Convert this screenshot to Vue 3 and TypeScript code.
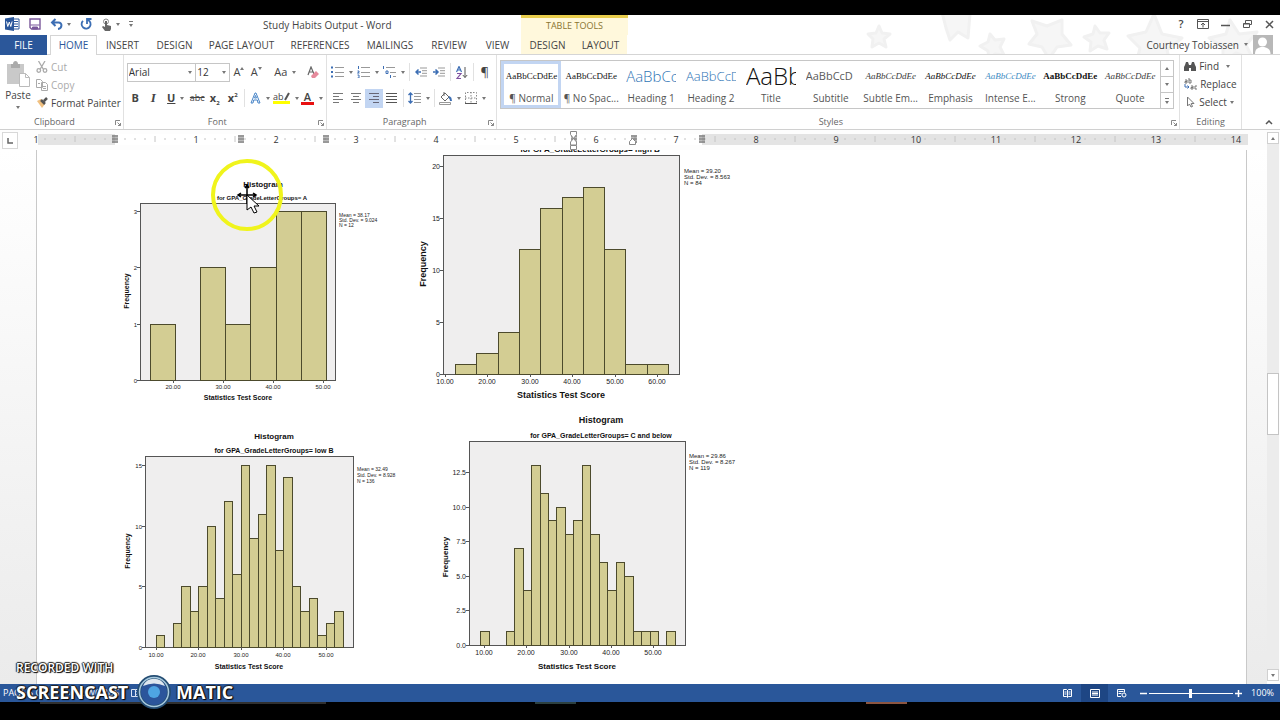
<script setup lang="ts">
import { ref } from 'vue'

interface Tab { name: string; width: number }
interface StyleItem { name: string; sample: string; kind: string }
interface Tick { at: number; label: string }
interface Chart {
  id: string
  view: [number, number, number, number]
  title?: string
  titleAt: [number, number]
  subtitle: string
  subtitleAt: [number, number]
  frame: [number, number, number, number]
  base: number
  unit: number
  start: number
  barWidth: number
  counts: number[]
  xTicks: Tick[]
  yTicks: Tick[]
  stats: string[]
  statsAt: [number, number]
  axisAt: [number, number]
  freqAt: [number, number]
  size: string
}

const tabs: Tab[] = [
  { name: 'INSERT', width: 51 },
  { name: 'DESIGN', width: 53 },
  { name: 'PAGE LAYOUT', width: 81 },
  { name: 'REFERENCES', width: 76 },
  { name: 'MAILINGS', width: 64 },
  { name: 'REVIEW', width: 54 },
  { name: 'VIEW', width: 43 },
]

const styleItems: StyleItem[] = [
  { name: '¶ Normal', sample: 'AaBbCcDdEe', kind: 'normal' },
  { name: '¶ No Spac...', sample: 'AaBbCcDdEe', kind: 'normal' },
  { name: 'Heading 1', sample: 'AaBbCc', kind: 'h1' },
  { name: 'Heading 2', sample: 'AaBbCcD', kind: 'h2' },
  { name: 'Title', sample: 'AaBb', kind: 'title' },
  { name: 'Subtitle', sample: 'AaBbCcD', kind: 'subtitle' },
  { name: 'Subtle Em...', sample: 'AaBbCcDdEe', kind: 'subtle' },
  { name: 'Emphasis', sample: 'AaBbCcDdEe', kind: 'emphasis' },
  { name: 'Intense E...', sample: 'AaBbCcDdEe', kind: 'intense' },
  { name: 'Strong', sample: 'AaBbCcDdEe', kind: 'strong' },
  { name: 'Quote', sample: 'AaBbCcDdEe', kind: 'quote' },
]

const ticks = (first: number, step: number, labels: string[]): Tick[] =>
  labels.map((label, i) => ({ at: Math.round(first + i * step), label }))

const leftCharts: Chart[] = [
  {
    id: 'a', view: [117, 150, 290, 264], title: 'Histogram', titleAt: [263, 187],
    subtitle: 'for GPA_GradeLetterGroups= A', subtitleAt: [262, 200],
    frame: [140, 203, 195, 177], base: 380, unit: 56.3, start: 150, barWidth: 25.1,
    counts: [1, 0, 2, 1, 2, 3, 3],
    xTicks: ticks(173, 50.1, ['20.00', '30.00', '40.00', '50.00']),
    yTicks: ticks(380, -56.3, ['0', '1', '2', '3']),
    stats: ['Mean = 38.17', 'Std. Dev. = 9.024', 'N = 12'], statsAt: [339, 217],
    axisAt: [238, 400], freqAt: [129, 291], size: 'small',
  },
  {
    id: 'low-b', view: [117, 414, 290, 264], title: 'Histogram', titleAt: [274, 439],
    subtitle: 'for GPA_GradeLetterGroups= low B', subtitleAt: [274, 453],
    frame: [145, 456, 208, 191], base: 647, unit: 12.13, start: 156, barWidth: 8.48,
    counts: [1, 0, 2, 5, 3, 5, 10, 4, 12, 6, 15, 9, 11, 15, 8, 14, 5, 3, 4, 1, 2, 3],
    xTicks: ticks(156, 42.4, ['10.00', '20.00', '30.00', '40.00', '50.00']),
    yTicks: ticks(647, -60.7, ['0', '5', '10', '15']),
    stats: ['Mean = 32.49', 'Std. Dev. = 8.928', 'N = 136'], statsAt: [357, 471],
    axisAt: [249, 669], freqAt: [130, 551], size: 'medium',
  },
]

const rightCharts: Chart[] = [
  {
    id: 'high-b', view: [413, 150, 340, 256], titleAt: [590, 137],
    subtitle: 'for GPA_GradeLetterGroups= high B', subtitleAt: [590, 152],
    frame: [443, 155, 236, 219], base: 374, unit: 10.4, start: 455, barWidth: 21.3,
    counts: [1, 2, 4, 12, 16, 17, 18, 12, 1, 1],
    xTicks: ticks(445, 42.4, ['10.00', '20.00', '30.00', '40.00', '50.00', '60.00']),
    yTicks: ticks(374, -52, ['0', '5', '10', '15', '20']),
    stats: ['Mean = 39.20', 'Std. Dev. = 8.563', 'N = 84'], statsAt: [684, 173],
    axisAt: [561, 398], freqAt: [426, 264], size: 'huge',
  },
  {
    id: 'c', view: [413, 406, 340, 272], title: 'Histogram', titleAt: [601, 423],
    subtitle: 'for GPA_GradeLetterGroups= C and below', subtitleAt: [601, 438],
    frame: [469, 441, 216, 204], base: 645, unit: 13.85, start: 480.3, barWidth: 8.46,
    counts: [1, 0, 0, 1, 7, 4, 13, 11, 9, 10, 8, 9, 13, 8, 6, 4, 6, 5, 1, 1, 1, 0, 1],
    xTicks: ticks(484, 42.3, ['10.00', '20.00', '30.00', '40.00', '50.00']),
    yTicks: ticks(645, -34.6, ['0.0', '2.5', '5.0', '7.5', '10.0', '12.5']),
    stats: ['Mean = 29.86', 'Std. Dev. = 8.267', 'N = 119'], statsAt: [689, 458],
    axisAt: [577, 669], freqAt: [448, 557], size: 'large',
  },
]

const columns = [leftCharts, rightCharts]

const bars = (c: Chart) =>
  c.counts
    .map((n, i) => {
      const x = Math.round(c.start + i * c.barWidth)
      const right = Math.round(c.start + (i + 1) * c.barWidth)
      const y = Math.round(c.base - n * c.unit)
      return { n, x, y, w: right - x, h: c.base - y }
    })
    .filter((b) => b.n > 0)

const inches = Array.from({ length: 16 }, (_, i) => ({
  x: i * 80,
  label: i === 1 ? '' : String(Math.abs(i - 1)),
}))
const minor = Array.from({ length: 119 }, (_, i) => ({ x: i * 10 + 10, half: (i + 1) % 8 === 4 }))
  .filter((m) => m.x % 80 !== 0)
const markers = [80, 206, 291, 539, 599, 667]

const font = ref('Arial')
const fontSize = ref('12')
const zoom = ref(49)
</script>

<template>
  <div class="app">
    <header class="head">
      <svg class="stars" width="460" height="39" viewBox="820 15 460 39" aria-hidden="true">
        <g fill="#f6f6f6" stroke="#f1f1f1" stroke-width="3" stroke-linejoin="round">
          <path d="M879 26l3 7 8 1-6 5 2 8-7-4-7 4 1-8-5-5 8-1z" />
          <path d="M942 12l28 2-2 24-10-6-8 8-4-12z" />
          <path d="M990 34l5 6 9-1-4 8 4 8-9-1-6 5-1-8-8-5 8-4z" />
          <path d="M1032 21l15 5 15-6 0 14 9 11-14 2-8 12-7-12-13-3 8-10z" />
          <path d="M1095 26l5 7 9 0-5 7 3 9-9-3-8 5 1-9-7-5 9-3z" />
          <path d="M1154 14l8 20 20 4-15 12 4 16-17-10-18 8 4-16-12-12 18-4z" />
          <path d="M1230 20l9 14 18-2-11 13 7 14-17-6-13 10v-16l-14-9 17-4z" />
        </g>
      </svg>
      <div class="titlebar">
        <div class="qat">
          <svg class="logo" width="15" height="14" viewBox="0 0 15 14"><path d="M8 2h6v10H8z" fill="#fff" stroke="#2b579a"/><path d="M9 4.5h4M9 7h4M9 9.500h4" stroke="#2b579a"/><path d="M0 1.500L9 0v14L0 12.500z" fill="#2b579a"/><path d="M1.500 4.500l1.300 5 1.500-4.500 1.500 4.500 1.300-5" fill="none" stroke="#fff"/></svg>
          <button aria-label="Save"><svg width="12" height="12" viewBox="0 0 12 12"><path d="M1 1h10v10H2.500L1 9.500z" fill="#fff" stroke="#79579a" stroke-width="1.400"/><path d="M1.500 7h9M3.500 9h5v2h-5z" fill="#79579a" stroke="#79579a"/></svg></button>
          <button aria-label="Undo" class="wide"><svg width="14" height="12" viewBox="0 0 14 12"><path d="M5.500 1L2 4.500 5.500 8M2 4.500h6.500c4 0 4 6-.5 6.500" fill="none" stroke="#3c6eb4" stroke-width="2"/></svg><i class="caret"></i></button>
          <button aria-label="Repeat"><svg width="12" height="12" viewBox="0 0 12 12"><path d="M8 2A4.500 4.500 0 1 1 3 2.800M7 6V1h4.500" fill="none" stroke="#3c6eb4" stroke-width="1.800"/></svg></button>
          <button aria-label="Touch mode" class="wide"><svg width="12" height="13" viewBox="0 0 12 13"><circle cx="5" cy="3.500" r="2.500" fill="none" stroke="#888"/><path d="M4 3h2v4l4 1v3l-1 2H4L1 9l1-1 2 1z" fill="#666"/></svg><i class="caret"></i></button>
          <button aria-label="Customize toolbar"><span class="more"><i class="caret"></i></span></button>
        </div>
        <h1>Study Habits Output - Word</h1>
        <div class="tools">TABLE TOOLS</div>
        <div class="winbtns">
          <button aria-label="Help">?</button>
          <button aria-label="Ribbon display"><svg width="12" height="10" viewBox="0 0 12 10" fill="none" stroke="#555"><path d="M.5.500h11v9H.5zM.5 2.500h11M6 8.500V4M4 6l2-2 2 2"/></svg></button>
          <button aria-label="Minimize"><svg width="9" height="10" viewBox="0 0 9 10"><path d="M0 6.500h9" stroke="#555" stroke-width="1.500"/></svg></button>
          <button aria-label="Restore"><svg width="9" height="9" viewBox="0 0 9 9" fill="none" stroke="#555"><path d="M2.500 3V.5h6v4H6.500M.5 3.500h6v4h-6zM.5 4h6"/></svg></button>
          <button aria-label="Close"><svg width="9" height="9" viewBox="0 0 9 9"><path d="M1 1l7 7M8 1L1 8" stroke="#555" stroke-width="1.500"/></svg></button>
        </div>
      </div>
      <nav class="tabs">
        <button class="file">FILE</button>
        <button class="home">HOME</button>
        <button v-for="t in tabs" :key="t.name" :style="{ width: t.width + 'px' }">{{ t.name }}</button>
        <div class="context">
          <button>DESIGN</button>
          <button>LAYOUT</button>
        </div>
        <button class="user">Courtney Tobiassen <i class="caret"></i></button>
        <svg class="avatar" width="20" height="19" viewBox="0 0 20 19"><path d="M0 0h20v19H0z" fill="#b8b8b8"/><circle cx="9.500" cy="7" r="4.500" fill="#fff"/><path d="M2 19c0-5 3-7 7.500-7s8 2 8 7z" fill="#fff"/></svg>
      </nav>
    </header>

    <section class="ribbon">
      <div class="group clipboard">
        <div class="body">
          <button class="paste">
            <svg width="25" height="27" viewBox="0 0 25 27"><path d="M1 3h17v20H1z" fill="#c9c9c9"/><path d="M5 3h2c0-4 5-4 5 0h2v4H5z" fill="#aaa"/><path d="M13.500 12.500h6l4 4v9h-10z" fill="#fff" stroke="#bbb"/><path d="M19.500 12.500v4h4" fill="none" stroke="#bbb"/></svg>
            <span>Paste</span><i class="caret"></i>
          </button>
          <div class="stack">
            <button class="dim"><svg width="12" height="12" viewBox="0 0 12 12" fill="none" stroke="#aaa" stroke-width="1.300"><path d="M2.500 0l5 8.500M9 0L4 8.500"/><circle cx="2.800" cy="9.500" r="1.800"/><circle cx="9" cy="9.500" r="1.800"/></svg>Cut</button>
            <button class="dim"><svg width="12" height="12" viewBox="0 0 12 12" fill="#fff" stroke="#aaa"><path d="M.5.500h4l2 2v6h-6zM5.500 3.500h4l2 2v6h-6zM7 7.500h3M7 9.500h3M2 4.500h2"/></svg>Copy</button>
            <button><svg width="12" height="12" viewBox="0 0 12 12"><path d="M1 4l4-2 4 5-3 4z" fill="#f0c080"/><path d="M5 3l4 4M8 4l3-3" stroke="#555" stroke-width="2.500"/></svg>Format Painter</button>
          </div>
        </div>
        <footer>Clipboard<button class="launch" aria-label="Clipboard options"><svg width="6" height="6" viewBox="0 0 6 6" fill="none" stroke="#888"><path d="M.5 5V.5H5M2.500 2.500l3 3M5.500 3v2.500H3"/></svg></button></footer>
      </div>

      <div class="group fonts">
        <div class="body rows">
          <div class="row">
            <label class="combo name"><select v-model="font" aria-label="Font"><option>Arial</option></select><i class="caret"></i></label>
            <label class="combo size"><select v-model="fontSize" aria-label="Font size"><option>12</option></select><i class="caret"></i></label>
            <button class="w18 up" aria-label="Grow font">A<i class="caret flip"></i></button>
            <button class="w18 up" aria-label="Shrink font">A<i class="caret"></i></button>
            <button class="w30">Aa<i class="caret"></i></button>
            <button class="w26" aria-label="Clear formatting"><svg width="12" height="13" viewBox="0 0 12 13"><path d="M1 9l3-8 3 7M2 6h4" fill="none" stroke="#666" stroke-width="1.200"/><path d="M4 10l5-5 3 3-4 4H5z" fill="#e68a9c"/></svg></button>
          </div>
          <div class="row">
            <button class="w16"><b>B</b></button>
            <button class="w20 serif"><em>I</em></button>
            <button class="w26"><u>U</u><i class="caret"></i></button>
            <button class="w16"><s>abc</s></button>
            <button class="w18"><b>x<sub>2</sub></b></button>
            <button class="w18"><b>x<sup>2</sup></b></button>
            <span class="sep"></span>
            <button class="w26" aria-label="Text effects"><svg width="11" height="12" viewBox="0 0 11 12"><path d="M1 11L5 1h1l4 10H8L7.300 8H3.700L3 11zM4.500 6h2L5.500 3.500z" fill="#fff" stroke="#4a86c8" stroke-width="1"/></svg><i class="caret"></i></button>
            <button class="w26" aria-label="Highlight"><span class="hl">ab<svg width="6" height="9" viewBox="0 0 6 9"><path d="M1 8l4-7" stroke="#555" stroke-width="2"/></svg></span><i class="caret"></i></button>
            <button class="w26" aria-label="Font color"><span class="fc">A</span><i class="caret"></i></button>
          </div>
        </div>
        <footer>Font<button class="launch" aria-label="Font options"><svg width="6" height="6" viewBox="0 0 6 6" fill="none" stroke="#888"><path d="M.5 5V.5H5M2.500 2.500l3 3M5.500 3v2.500H3"/></svg></button></footer>
      </div>

      <div class="group para">
        <div class="body rows">
          <div class="row">
            <button class="w26" aria-label="Bullets"><svg width="13" height="12" viewBox="0 0 13 12"><path d="M0 1.500h2M0 6h2M0 10.500h2" stroke="#3c6eb4" stroke-width="2"/><path d="M4 1.500h9M4 6.500h9M4 10.500h9" stroke="#999"/></svg><i class="caret"></i></button>
            <button class="w26" aria-label="Numbering"><svg width="13" height="12" viewBox="0 0 13 12"><path d="M1.500 0v3M.5 5h1.500v1L.5 7H2.500M.5 9H2v3H.5" stroke="#3c6eb4" fill="none"/><path d="M4 1.500h9M4 6.500h9M4 10.500h9" stroke="#999"/></svg><i class="caret"></i></button>
            <button class="w26" aria-label="Multilevel list"><svg width="13" height="12" viewBox="0 0 13 12"><path d="M.5 0v3M3 5h2v2.500H3V5M7.500 9v3" stroke="#3c6eb4" fill="none"/><path d="M3 1.500h9M7 6.500h6M10 10.500h3" stroke="#999"/></svg><i class="caret"></i></button>
            <span class="sep"></span>
            <button class="w18" aria-label="Decrease indent"><svg width="12" height="10" viewBox="0 0 12 10"><path d="M5 1h7M7 3.700h5M7 6.300h5M5 9h7" stroke="#999"/><path d="M6 5H1M3.500 2.500L1 5l2.500 2.500" stroke="#3c6eb4" stroke-width="1.500" fill="none"/></svg></button>
            <button class="w18" aria-label="Increase indent"><svg width="12" height="10" viewBox="0 0 12 10"><path d="M5 1h7M7 3.700h5M7 6.300h5M5 9h7" stroke="#999"/><path d="M0 5h5M2.500 2.500L5 5 2.500 7.500" stroke="#3c6eb4" stroke-width="1.500" fill="none"/></svg></button>
            <span class="sep"></span>
            <button class="w18" aria-label="Sort"><svg width="12" height="13" viewBox="0 0 12 13" fill="none"><path d="M.5 6L3 .5 5.500 6M1.500 4h3" stroke="#3c6eb4" stroke-width="1.200"/><path d="M1 7.500h4L1 12.500h4" stroke="#8050a0" stroke-width="1.200"/><path d="M9 1v10.500M6.800 9L9 11.500 11.200 9" stroke="#555"/></svg></button>
            <span class="sep"></span>
            <button class="w18 pil">¶</button>
          </div>
          <div class="row">
            <button class="w18" aria-label="Align left"><svg width="10" height="10" viewBox="0 0 10 10"><path d="M0 .5h10M0 3.500h6M0 6.500h10M0 9.500h6" stroke="#777"/></svg></button>
            <button class="w18" aria-label="Center"><svg width="10" height="10" viewBox="0 0 10 10"><path d="M0 .5h10M2 3.500h6M0 6.500h10M2 9.500h6" stroke="#777"/></svg></button>
            <button class="w18 on" aria-label="Align right"><svg width="10" height="10" viewBox="0 0 10 10"><path d="M0 .5h10M4 3.500h6M0 6.500h10M4 9.500h6" stroke="#667"/></svg></button>
            <button class="w18" aria-label="Justify"><svg width="11" height="10" viewBox="0 0 11 10"><path d="M0 .5h11M0 3.500h11M0 6.500h11M0 9.500h11" stroke="#555"/></svg></button>
            <span class="sep"></span>
            <button class="w26" aria-label="Line spacing"><svg width="13" height="12" viewBox="0 0 13 12"><path d="M2.500 1v10M.5 3l2-2 2 2M.5 9l2 2 2-2" stroke="#3c6eb4" fill="none" stroke-width="1.300"/><path d="M6 1.500h7M6 4.500h7M6 7.500h7M6 10.500h7" stroke="#999"/></svg><i class="caret"></i></button>
            <span class="sep"></span>
            <button class="w26" aria-label="Shading"><svg width="13" height="13" viewBox="0 0 13 13"><path d="M2 5l4-4 4 4-4 4zM5 0v4" stroke="#666" fill="#fff"/><path d="M10 5c2 1 2 3 2 4" stroke="#3c6eb4" stroke-width="2" fill="none"/><path d="M.5 10.500h11v2H.5z" fill="#fff" stroke="#999"/></svg><i class="caret"></i></button>
            <button class="w26" aria-label="Borders"><svg width="12" height="12" viewBox="0 0 12 12" fill="none" stroke="#888"><path d="M.5 11V.5h11V11M6 0v12M0 6h12" stroke-dasharray="1.500 1.500"/><path d="M0 11.500h12" stroke="#555"/></svg><i class="caret"></i></button>
          </div>
        </div>
        <footer>Paragraph<button class="launch" aria-label="Paragraph options"><svg width="6" height="6" viewBox="0 0 6 6" fill="none" stroke="#888"><path d="M.5 5V.5H5M2.500 2.500l3 3M5.500 3v2.500H3"/></svg></button></footer>
      </div>

      <div class="group styles">
        <div class="body">
          <div class="gallery">
            <button v-for="(s, i) in styleItems" :key="s.name" class="style" :class="{ picked: i === 0 }">
              <span class="sample" :class="s.kind">{{ s.sample }}</span>
              <span class="sname">{{ s.name }}</span>
            </button>
            <div class="scrollers">
              <button aria-label="Previous styles"><i class="caret flip"></i></button>
              <button aria-label="Next styles"><i class="caret"></i></button>
              <button aria-label="More styles"><span class="more"><i class="caret"></i></span></button>
            </div>
          </div>
        </div>
        <footer>Styles<button class="launch" aria-label="Style options"><svg width="6" height="6" viewBox="0 0 6 6" fill="none" stroke="#888"><path d="M.5 5V.5H5M2.500 2.500l3 3M5.500 3v2.500H3"/></svg></button></footer>
      </div>

      <div class="group editing">
        <div class="body">
          <div class="stack">
            <button><svg width="12" height="11" viewBox="0 0 12 11"><path d="M1 4l1-3h2l1 3v6H0V6zM7 4l1-3h2l1 3 1 2v4H7zM5 4h2v3H5z" fill="#555"/></svg>Find <i class="caret gap"></i></button>
            <button><svg width="13" height="12" viewBox="0 0 13 12" fill="none"><path d="M1 2h2v3H1V3.500h2M5 0v5h2V2H5M7 8h2v3H7V9.500h2M13 8h-2v3h2" stroke="#777"/><path d="M1 6v3h4M3.500 7.500L5 9l-1.500 1.500" stroke="#3c6eb4"/></svg>Replace</button>
            <button><svg width="12" height="12" viewBox="0 0 12 12"><path d="M3.500 1v9l2-2 1.500 3 1.500-.5L7.200 7.500H10z" fill="#fff" stroke="#777"/></svg>Select<i class="caret"></i></button>
          </div>
        </div>
        <footer>Editing</footer>
      </div>
      <button class="collapse" aria-label="Collapse ribbon"><svg width="8" height="5" viewBox="0 0 8 5"><path d="M1 4l3-3 3 3" fill="none" stroke="#555" stroke-width="1.500"/></svg></button>
    </section>

    <main class="work">
      <div class="canvas">
        <div class="rulerbar">
          <button class="tabstop" aria-label="Tab stop"><svg width="6" height="6" viewBox="0 0 6 6"><path d="M1 0v5h5" fill="none" stroke="#666" stroke-width="1.500"/></svg></button>
          <svg class="ruler" width="1213" height="20" viewBox="0 0 1213 20">
            <path d="M3 4h1210v11H3z" fill="#e3e3e3" />
            <path d="M80 4h587v11H80z" fill="#fff" />
            <path v-for="m in minor" :key="m.x" :d="m.half ? `M${m.x} 6v6` : `M${m.x} 8v2`" stroke="#c4c4c4" />
            <text v-for="n in inches" :key="n.x" :x="n.x + 1" y="13" text-anchor="middle">{{ n.label }}</text>
            <path v-for="k in markers" :key="k" :d="`M${k - 3} 6h6M${k - 3} 9h6M${k - 3} 12h6M${k - 2} 5v8M${k} 5v8M${k + 2} 5v8`" stroke="#777" />
            <g fill="#fff" stroke="#888"><path d="M535.500 1.500h6v3l-3 4-3-4zM535.500 15v-3l3-3.500 3 3.500v3zM535.500 15.500h6v4h-6zM594.500 14.500v-3l3-3 3 3v3z" /></g>
          </svg>
        </div>
        <div class="desk">
          <article class="page">
            <div v-for="(col, i) in columns" :key="i" class="col">
              <svg v-for="c in col" :key="c.id" :width="c.view[2]" :height="c.view[3]" :viewBox="c.view.join(' ')" class="chart" :class="c.size">
                <rect :x="c.frame[0]" :y="c.frame[1]" :width="c.frame[2]" :height="c.frame[3]" class="plot" />
                <rect v-for="b in bars(c)" :key="b.x" :x="b.x" :y="b.y" :width="b.w" :height="b.h" class="bar" />
                <g class="axis">
                  <path v-for="t in c.yTicks" :key="t.label" :d="`M${c.frame[0] - 3} ${t.at}h3`" />
                  <path v-for="t in c.xTicks" :key="t.label" :d="`M${t.at} ${c.base}v3`" />
                </g>
                <g class="ticks">
                  <text v-for="t in c.yTicks" :key="t.label" :x="c.frame[0] - 3" :y="t.at + 3" text-anchor="end">{{ t.label }}</text>
                  <text v-for="t in c.xTicks" :key="t.label" :x="t.at" :y="c.base + (c.size === 'small' ? 9 : 10)" text-anchor="middle">{{ t.label }}</text>
                </g>
                <g class="stats">
                  <text v-for="(s, k) in c.stats" :key="s" :x="c.statsAt[0]" :y="c.statsAt[1] + k * (c.size === 'small' ? 5 : 6)">{{ s }}</text>
                </g>
                <text v-if="c.title" class="ctitle" :x="c.titleAt[0]" :y="c.titleAt[1]">{{ c.title }}</text>
                <text class="csub" :x="c.subtitleAt[0]" :y="c.subtitleAt[1]">{{ c.subtitle }}</text>
                <text class="clabel" :x="c.axisAt[0]" :y="c.axisAt[1]">Statistics Test Score</text>
                <text class="clabel" :transform="`translate(${c.freqAt[0]} ${c.freqAt[1]}) rotate(-90)`">Frequency</text>
              </svg>
            </div>
          </article>
        </div>
      </div>
      <div class="scrollbar">
        <button aria-label="Scroll up"><i class="caret flip"></i></button>
        <div class="track"><div class="thumb"></div></div>
        <button aria-label="Scroll down"><i class="caret"></i></button>
      </div>
    </main>

    <footer class="status">
      <span class="page-no">PAGE 5 OF 8</span>
      <span class="words">412 WORDS</span>
      <svg class="proof" width="10" height="10" viewBox="0 0 10 10" fill="none" stroke="#dce6f5"><path d="M.5 1.500h4v7h-4zM4.500 1.500h4M4.500 8.500h4M5.500 3l3 4M8.500 3l-3 4"/></svg>
      <div class="views">
        <button aria-label="Read mode"><svg width="9" height="9" viewBox="0 0 9 9" fill="none" stroke="#fff"><path d="M.5.500h3l1 1 1-1h3v7h-3l-1 1-1-1h-3zM4.500 1v7M1.500 3h2M1.500 5h2M5.500 3h2M5.500 5h2"/></svg></button>
        <button class="current" aria-label="Print layout"><svg width="10" height="9" viewBox="0 0 10 9" fill="none" stroke="#fff"><path d="M.5.500h9v8h-9zM2 3h6M2 4.500h6M2 6h6"/></svg></button>
        <button aria-label="Web layout"><svg width="10" height="9" viewBox="0 0 10 9" fill="none" stroke="#fff"><path d="M4 7.500H.5v-7h7v3M1.500 2.500h5M1.500 4.500h3"/><circle cx="7" cy="6" r="2"/></svg></button>
      </div>
      <button class="zb" aria-label="Zoom out"><svg width="7" height="7" viewBox="0 0 7 7"><path d="M0 3.500h7" stroke="#fff" stroke-width="1.500"/></svg></button>
      <input v-model="zoom" type="range" aria-label="Zoom" />
      <button class="zb" aria-label="Zoom in"><svg width="7" height="7" viewBox="0 0 7 7"><path d="M0 3.500h7M3.500 0v7" stroke="#fff" stroke-width="1.500"/></svg></button>
      <span class="pct">100%</span>
    </footer>
    <div class="under">
      <span class="edge long"></span><span class="edge slate"></span><span class="edge rust"></span>
    </div>

    <svg class="pointer" width="76" height="76" viewBox="0 0 76 76" aria-hidden="true">
      <circle cx="38" cy="38" r="34" fill="none" stroke="#f0f41c" stroke-width="4" />
      <path d="M38 29v18M30 38h16M36 31l2-3 2 3M32 36l-3 2 3 2M44 36l3 2-3 2" fill="none" stroke="#000" stroke-width="1.500" />
      <path d="M38 38v15l4-3 3 6 3-1-3-6h5z" fill="#fff" stroke="#000" />
    </svg>

    <div class="watermark">
      <span class="rec">RECORDED WITH</span>
      <div class="brand">
        <span class="left">SCREENCAST</span>
        <svg width="36" height="36" viewBox="0 0 36 36"><circle cx="18" cy="18" r="15" fill="#2b559b" stroke="#244d73" stroke-width="4"/><circle cx="18" cy="18" r="14.500" fill="none" stroke="#a7c9de" stroke-width="1.500"/><path d="M7 12a12 12 0 0 1 22 0q-11-5-22 0z" fill="#dfe8ef"/><circle cx="18" cy="18" r="6" fill="#4ea5e3"/></svg>
        <span>MATIC</span>
      </div>
    </div>
  </div>
</template>

<style>
body { margin: 0; background: #000; }
</style>

<style scoped>
* { box-sizing: border-box; }
.app { position: relative; display: flex; flex-direction: column; height: 100vh; min-height: 600px; padding-top: 15px; background: #000; color: #444; font: 10px/14px "Open Sans", "Noto Sans", sans-serif; overflow: hidden; }
button { display: inline-flex; align-items: center; justify-content: center; padding: 0; margin: 0; border: 0; background: none; color: inherit; font: inherit; white-space: nowrap; }
svg { flex: none; display: block; }
.caret { flex: none; width: 0; height: 0; border: 2px solid transparent; border-top: 3px solid #777; border-bottom: 0; }
.flip { transform: rotate(180deg); }
.more { display: flex; border-top: 1px solid #777; padding-top: 2px; }

.head { position: relative; background: #fff; flex: none; }
.stars { position: absolute; right: 0; top: 0; }
.titlebar { position: relative; display: flex; height: 20px; }
.qat { display: flex; align-items: center; width: 263px; padding: 0 0 2px 5px; gap: 9px; }
.qat .wide { gap: 3px; }
h1 { width: 258px; margin: 0; font-size: 10px; font-weight: 400; line-height: 20px; }
.tools { width: 107px; background: #fff8dc; border-top: 3px solid #e8cd4c; color: #8a7430; font-size: 9px; line-height: 16px; text-align: center; }
.winbtns { margin-left: auto; display: flex; align-items: center; padding-bottom: 2px; }
.winbtns button { width: 22px; font-size: 11px; font-weight: 600; }
.tabs { position: relative; display: flex; height: 20px; border-bottom: 1px solid #d5d5d5; }
.file { width: 47px; height: 20px; background: #2b579a; color: #fff; }
.home { width: 47px; height: 20px; margin-left: 3px; padding-bottom: 2px; border: 1px solid #d5d5d5; border-bottom: 0; background: #fff; color: #2b579a; }
.context { display: flex; margin-left: 2px; background: #fff8dc; }
.context button { width: 53px; }
.user { margin-left: auto; gap: 5px; padding-right: 5px; }
.avatar { margin-right: 7px; }

.ribbon { position: relative; display: flex; flex: none; height: 75px; background: #fff; border-bottom: 1px solid #d0d0d0; }
.group { display: flex; flex-direction: column; border-right: 1px solid #e1e1e1; }
.group .body { flex: 1; display: flex; }
.group footer { position: relative; height: 15px; font-size: 9px; line-height: 16px; text-align: center; color: #666; }
.launch { position: absolute; right: 2px; top: 6px; }
.clipboard { width: 124px; }
.clipboard footer { padding-right: 14px; }
.fonts { width: 203px; padding-left: 3px; }
.fonts footer { padding-right: 18px; }
.para { width: 171px; padding-left: 2px; }
.para footer { padding-right: 16px; }
.styles { width: 684px; flex: 1 1 auto; padding-left: 3px; }
.styles footer { padding-right: 18px; }
.editing { width: 62px; }
.paste { flex: none; flex-direction: column; width: 36px; padding-top: 2px; justify-content: flex-start; margin-top: 4px; }
.paste .caret { margin-top: 4px; }
.stack { display: flex; flex-direction: column; align-items: flex-start; padding-top: 3px; }
.stack button { height: 18px; gap: 3px; }
.dim { color: #aaa; }
.rows { flex-direction: column; padding-top: 6px; gap: 4px; }
.row { display: flex; align-items: center; height: 22px; font-size: 11px; }
.row button { height: 19px; gap: 5px; }
.row .w16 { width: 17px; }
.row .w18 { width: 18px; }
.row .w20 { width: 19px; }
.row .w26 { width: 26px; }
.row .w30 { width: 32px; margin-left: 5px; }
.combo { display: flex; align-items: center; height: 19px; border: 1px solid #c6c6c6; padding-right: 3px; }
.combo select { appearance: none; flex: 1; min-width: 0; border: 0; padding: 0 0 0 1px; background: none; font-family: inherit; font-size: 10px; color: #333; }
.combo.name { width: 72px; }
.combo.size { width: 35px; border-left: 0; }
.row .up { gap: 0; }
.up .caret { align-self: flex-start; margin-top: 4px; }
.serif { font-family: "Liberation Serif", serif; font-size: 13px; font-weight: 700; }
.row s { font-size: 9px; }
.row sub, .row sup { font-size: 6px; line-height: 0; }
.row u { font-weight: 700; }
.sep { width: 1px; height: 18px; background: #e1e1e1; margin: 0 2px; flex: none; }
.hl { display: flex; font-size: 9px; line-height: 9px; border-bottom: 3px solid #ff0; }
.fc { width: 13px; line-height: 10px; font-weight: 600; border-bottom: 3px solid #e81010; }
.pil { font-size: 13px; }
.on { background: #c2d5f2; }

.gallery { display: flex; flex: 1; height: 49px; margin: 5px 5px 0 0; border: 1px solid #c6c6c6; }
.style { flex: 1 1 0; min-width: 0; flex-direction: column; justify-content: flex-start; overflow: hidden; }
.style.picked { box-shadow: inset 0 0 0 3px #c2d5f2; }
.sample { display: flex; align-items: center; justify-content: center; width: 56px; height: 30px; overflow: hidden; color: #111; font-family: "Liberation Serif", serif; font-size: 9px; }
.sname { line-height: 14px; color: #555; font-size: 10px; }
.h1, .h2, .title, .subtitle { width: 50px; justify-content: flex-start; font-family: "Open Sans", "Noto Sans", sans-serif; font-weight: 300; }
.h1 { font-size: 15px; color: #2e74b5; }
.h2 { font-size: 13px; color: #2e74b5; }
.title { font-size: 24px; line-height: 24px; }
.subtitle { font-size: 11px; color: #5a5a5a; font-weight: 400; }
.subtle, .emphasis, .intense, .quote { font-style: italic; }
.subtle, .quote { color: #404040; }
.intense { color: #3f8dc4; }
.strong { font-weight: 700; }
.scrollers { display: flex; flex-direction: column; width: 13px; border-left: 1px solid #c6c6c6; }
.scrollers button { flex: 1; border-bottom: 1px solid #c6c6c6; }
.scrollers button:last-child { border: 0; }
.editing .stack { padding-left: 4px; padding-top: 2px; }
.gap { margin-left: 4px; }
.collapse { width: 38px; align-self: flex-end; height: 14px; padding-left: 15px; }

.work { flex: 1; display: flex; min-height: 0; background: #fdfdfd; }
.canvas { flex: 1; min-width: 0; display: flex; flex-direction: column; overflow: hidden; }
.rulerbar { display: flex; flex: none; height: 20px; align-items: flex-start; }
.tabstop { width: 16px; height: 17px; margin: 2px 17px 0 2px; border: 1px solid #d8d8d8; background: #fff; flex: none; }
.ruler { overflow: visible; }
.ruler text { font: 9px "Open Sans", sans-serif; fill: #333; }
.desk { flex: 1; min-height: 0; padding: 0 20px 0 36px; background: linear-gradient(#fff, #ebebeb); }
.page { display: flex; height: 100%; gap: 6px; padding-left: 80px; background: #fff; border: solid #c9c9c9; border-width: 0 1px; overflow: hidden; }
.col { flex: none; }
.chart { font-family: "Liberation Sans", Arial, sans-serif; }
.plot { fill: #efeeee; stroke: #555; shape-rendering: crispEdges; }
.bar { fill: #d3cd93; stroke: #4c4a2c; shape-rendering: crispEdges; }
.axis { stroke: #555; shape-rendering: crispEdges; }
.ticks { font-size: 7px; fill: #222; }
.small .ticks, .medium .ticks { font-size: 6px; }
.stats { font-size: 6px; fill: #222; }
.small .stats, .medium .stats { font-size: 5px; }
.ctitle, .csub, .clabel { font-weight: 700; text-anchor: middle; fill: #111; }
.ctitle { font-size: 8px; }
.large .ctitle { font-size: 9px; }
.csub { font-size: 7px; }
.small .csub { font-size: 6px; }
.huge .csub { font-size: 8px; }
.clabel { font-size: 7px; }
.large .clabel { font-size: 8px; }
.huge .clabel { font-size: 9px; }
.scrollbar { width: 13px; flex: none; display: flex; flex-direction: column; padding: 2px 1px 3px 0; }
.scrollbar button { height: 12px; border: 1px solid #d0d0d0; background: #fff; }
.track { flex: 1; background: #ececec; display: grid; grid-template-rows: 230fr 62fr 235fr; }
.thumb { grid-row: 2; background: #fff; border: 1px solid #c4c4c4; }

.status { flex: none; display: flex; align-items: center; height: 18px; padding: 0 6px 0 3px; background: #2a579a; color: #fff; font-size: 9px; }
.page-no { width: 66px; }
.words { width: 62px; }
.views { display: flex; margin-left: auto; align-self: stretch; margin-right: 3px; }
.views button { width: 27px; }
.views .current { background: #1e4684; }
.zb { width: 11px; }
.status input { appearance: none; width: 84px; height: 12px; margin: 0; background: linear-gradient(#fff, #fff) center / 100% 1px no-repeat; }
.status input::-webkit-slider-thumb { appearance: none; width: 3px; height: 9px; background: #fff; }
.pct { width: 30px; text-align: right; font-size: 9px; }
.under { flex: none; height: 18px; display: flex; align-items: flex-start; padding-left: 40px; background: #000; }
.edge { height: 2px; }
.long { width: 286px; background: #303030; margin-right: 209px; }
.slate { width: 41px; background: #2c4040; margin-right: 290px; }
.rust { width: 41px; background: #8c5540; }

.pointer { position: absolute; left: 209px; top: 157px; }
.watermark { position: absolute; left: 16px; bottom: 10px; color: #fff; font-family: "Open Sans", sans-serif; font-weight: 700; text-shadow: 1px 1px 1px #000, -1px 0 1px #222, 0 -1px 1px #222, 1px 0 1px #222; }
.rec { display: block; font-size: 12px; line-height: 12px; font-weight: 600; }
.brand { display: flex; align-items: center; height: 36px; font-size: 18px; gap: 4px; }
.left { width: 116px; }
</style>
